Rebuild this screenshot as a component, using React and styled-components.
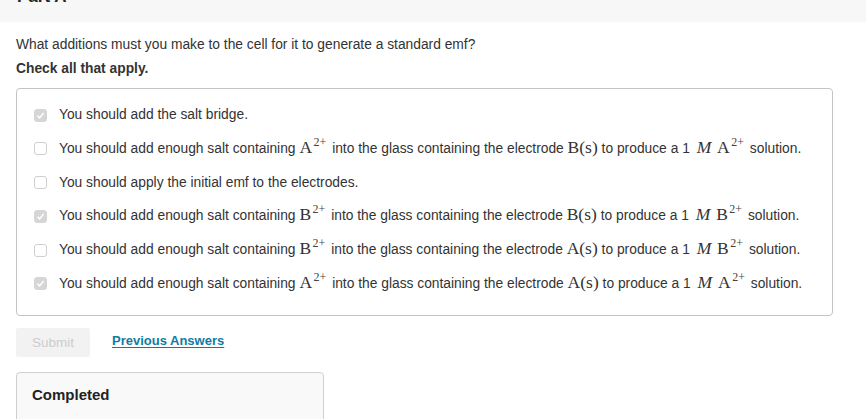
import styled, { createGlobalStyle } from 'styled-components';

const GlobalStyle = createGlobalStyle`
    body {
        margin: 0;
        background: #fff;
        font-family: "Liberation Sans", Arial, Helvetica, sans-serif;
        font-size: 13.8px;
        color: #333;
    }
`;

const options = [
    { checked: true, text: <>You should add the salt bridge.</> },
    {
        checked: false,
        text: <>You should add enough salt containing <Ion el='A' /> into the glass containing the electrode <Solid el='B' /> to produce a 1 <Molar /> <Ion el='A' /> solution.</>,
    },
    { checked: false, text: <>You should apply the initial emf to the electrodes.</> },
    {
        checked: true,
        text: <>You should add enough salt containing <Ion el='B' /> into the glass containing the electrode <Solid el='B' /> to produce a 1 <Molar /> <Ion el='B' /> solution.</>,
    },
    {
        checked: false,
        text: <>You should add enough salt containing <Ion el='B' /> into the glass containing the electrode <Solid el='A' /> to produce a 1 <Molar /> <Ion el='B' /> solution.</>,
    },
    {
        checked: true,
        text: <>You should add enough salt containing <Ion el='A' /> into the glass containing the electrode <Solid el='A' /> to produce a 1 <Molar /> <Ion el='A' /> solution.</>,
    },
];

function Ion({ el }) {
    return (
        <Math $trail>
            {el}<Sup>2+</Sup>
        </Math>
    );
}

function Solid({ el }) {
    return <Math>{el}(s)</Math>;
}

function Molar() {
    return <Math $italic>M</Math>;
}

function CheckMark() {
    return (
        <svg width='9' height='9' viewBox='0 0 9 9'>
            <path d='M1.5 4.8 L3.6 6.9 L7.6 2' fill='none' stroke='#fff' strokeWidth='1.5' />
        </svg>
    );
}

function App() {
    return (
        <>
            <GlobalStyle />
            <Header>
                <PartTitle>Part A</PartTitle>
            </Header>
            <Content>
                <Question>What additions must you make to the cell for it to generate a standard emf?</Question>
                <Hint>Check all that apply.</Hint>
                <OptionsBox>
                    {options.map((o, i) => (
                        <OptionRow key={i}>
                            <Checkbox $checked={o.checked}>{o.checked && <CheckMark />}</Checkbox>
                            <OptionText>{o.text}</OptionText>
                        </OptionRow>
                    ))}
                </OptionsBox>
                <Actions>
                    <SubmitButton disabled>Submit</SubmitButton>
                    <PrevLink href='#'>Previous Answers</PrevLink>
                </Actions>
                <Completed>Completed</Completed>
            </Content>
        </>
    );
}

const Header = styled.div`
    height: 22px;
    background: #f7f7f7;
    overflow: hidden;
    padding-left: 17px;
`;

const PartTitle = styled.h2`
    margin: -13px 0 0;
    font-size: 17px;
    line-height: 20px;
    font-weight: bold;
    color: #222;
`;

const Content = styled.div`
    padding: 0 16px;
`;

const Question = styled.p`
    margin: 15px 0 0;
    line-height: 16px;
`;

const Hint = styled.p`
    margin: 8px 0 0;
    font-weight: bold;
    line-height: 16px;
`;

const OptionsBox = styled.div`
    margin-top: 11px;
    width: 817px;
    box-sizing: border-box;
    border: 1.5px solid #c4c4c4;
    border-radius: 4px;
    padding: 14px 0 19px 17px;
    display: flex;
    flex-direction: column;
    gap: 9.8px;
`;

const OptionRow = styled.div`
    display: flex;
    align-items: center;
    height: 24px;
`;

const Checkbox = styled.span`
    width: 13px;
    height: 13px;
    box-sizing: border-box;
    border-radius: 3px;
    border: 1px solid ${p => (p.$checked ? '#d6d6d6' : '#cfcfcf')};
    background: ${p => (p.$checked ? '#d6d6d6' : '#fff')};
    display: flex;
    align-items: center;
    justify-content: center;
    margin-right: 12px;
    flex-shrink: 0;
`;

const OptionText = styled.span`
    color: #333;
    white-space: nowrap;
    line-height: 20px;
`;

const Math = styled.span`
    font-family: "Liberation Serif", "Times New Roman", serif;
    font-size: 17.5px;
    line-height: 0;
    font-style: ${p => (p.$italic ? 'italic' : 'normal')};
    margin: ${p => (p.$italic ? '0 2px 0 3px' : p.$trail ? '0 2px 0 0' : '0')};
`;

const Sup = styled.sup`
    font-size: 12px;
    line-height: 0;
    vertical-align: 7px;
    margin-left: 1.5px;
    color: #444;
`;

const Actions = styled.div`
    display: flex;
    align-items: center;
    gap: 22px;
    margin-top: 12px;
`;

const SubmitButton = styled.button`
    width: 74px;
    height: 29px;
    border: none;
    border-radius: 2px;
    background: #f2f2f2;
    color: #cdcdcd;
    font-family: inherit;
    font-size: 13.5px;
    padding: 0;
`;

const PrevLink = styled.a`
    color: #117ba3;
    font-weight: bold;
    font-size: 13px;
    text-decoration: underline;
    text-underline-offset: 2px;
    margin-top: -3px;
`;

const Completed = styled.div`
    margin-top: 15px;
    width: 308px;
    height: 60px;
    box-sizing: border-box;
    border: 1.5px solid #cfcfcf;
    border-radius: 4px;
    background: #f9f9f9;
    padding: 13px 15px;
    font-weight: bold;
    font-size: 15px;
    color: #222;
`;

export default App;
